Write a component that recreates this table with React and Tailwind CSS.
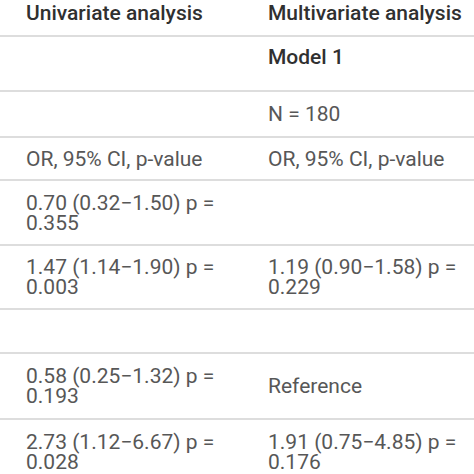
import React from 'react';

// rows of the results table: [left cell, right cell, row height]
const rows = [
  { left: null, right: 'N = 180', h: 'h-[46px]' },
  { left: 'OR, 95% CI, p-value', right: 'OR, 95% CI, p-value', h: 'h-[43px]' },
  { left: ['0.70 (0.32\u22121.50) p =', '0.355'], right: null, h: 'h-[65px]' },
  { left: ['1.47 (1.14\u22121.90) p =', '0.003'], right: ['1.19 (0.90\u22121.58) p =', '0.229'], h: 'h-[64px]' },
  { left: null, right: null, h: 'h-[44px]' },
  { left: ['0.58 (0.25\u22121.32) p =', '0.193'], right: 'Reference', h: 'h-[66px]' },
  { left: ['2.73 (1.12\u22126.67) p =', '0.028'], right: ['1.91 (0.75\u22124.85) p =', '0.176'], h: 'h-[66px]' },
];

const Cell = ({ value }) => {
  if (!value) return <div />;
  if (Array.isArray(value)) {
    return (
      <div className="pl-[26px] whitespace-nowrap">
        {value[0]}
        <br />
        {value[1]}
      </div>
    );
  }
  return <div className="pl-[26px] whitespace-nowrap">{value}</div>;
};

const App = () => {
  return (
    <div
      className="w-[474px] h-[474px] overflow-hidden bg-white text-[21px] leading-[20px] text-[#575757]"
      style={{ fontFamily: 'Roboto, "Liberation Sans", sans-serif' }}
    >
      {/* Header */}
      <div className="grid grid-cols-[242px_1fr] h-[35px] pt-[3px] font-medium text-[#303030]">
        <div className="pl-[26px] whitespace-nowrap">Univariate analysis</div>
        <div className="pl-[26px] whitespace-nowrap">Multivariate analysis</div>
      </div>

      {/* Model row */}
      <div className="grid grid-cols-[242px_1fr] h-[55px] border-t-2 border-[#dddddd] pt-[10px] font-medium text-[#303030]">
        <div />
        <div className="pl-[26px]">Model 1</div>
      </div>

      {rows.map((row, i) => (
        <div
          key={i}
          className={`grid grid-cols-[242px_1fr] items-center border-t-2 border-[#dddddd] ${row.h}`}
        >
          <Cell value={row.left} />
          <Cell value={row.right} />
        </div>
      ))}
    </div>
  );
};

export default App;
